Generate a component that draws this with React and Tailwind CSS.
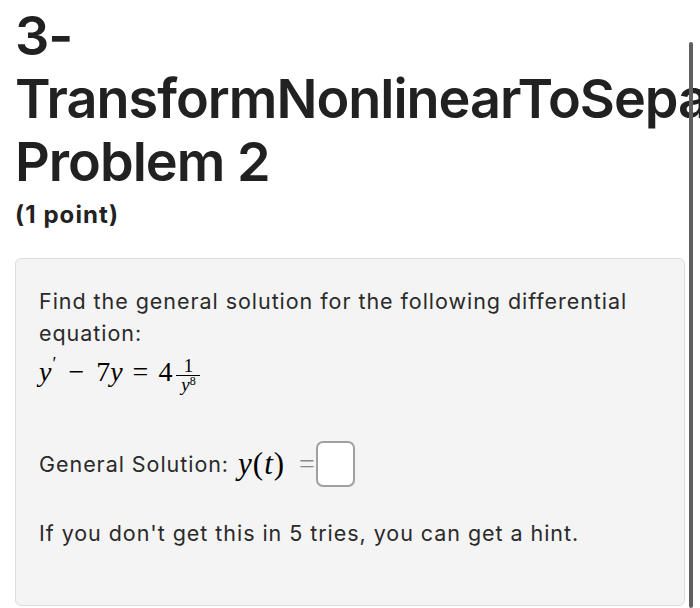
import React from "react";

const sans = { fontFamily: 'Inter, "Liberation Sans", Arial, sans-serif' };
const serif = { fontFamily: '"Liberation Serif", "Times New Roman", serif' };

export default function App() {
  return (
    <div className="relative w-[700px] h-[608px] overflow-hidden bg-white text-[#212529]" style={sans}>
      <div className="absolute left-[689px] top-[42px] w-[4px] h-[566px] bg-[#5f5f5f] rounded-full z-10" />
      <div className="pl-[15px] pt-[4px]">
        <h1 className="text-[54px] leading-[63px] font-semibold tracking-[-1px] whitespace-nowrap text-[#212121]">
          <div>3-</div>
          <div>TransformNonlinearToSeparable</div>
          <div>Problem 2</div>
        </h1>
        <div className="mt-[8px] text-[24px] font-bold leading-[28px] tracking-[1.1px] text-[#222]">(1 point)</div>
      </div>
      <div className="ml-[15px] mt-[29px] w-[670px] h-[348px] rounded-[6px] border border-[#dcdcdc] bg-[#f4f4f4] px-[23px] pt-[26px] text-[21.5px] tracking-[0.95px] text-[#2a2a2a]">
        <p className="leading-[32px]">Find the general solution for the following differential equation:</p>
        <div className="flex items-center h-[46px] text-[28px] tracking-normal text-black" style={serif}>
          <i className="pr-[1px]">y</i><span className="text-[18px] relative -top-[8px]">′</span>
          <span className="mx-[12px]">−</span>
          <span>7</span><i>y</i>
          <span className="mx-[10px]">=</span>
          <span>4</span>
          <span className="inline-flex flex-col items-center ml-[4px] relative top-[3px]">
            <span className="text-[19px] leading-[18px]">1</span>
            <span className="w-[24px] h-[1px] bg-black" />
            <span className="text-[19px] leading-[18px]"><i>y</i><sup className="text-[12px]">8</sup></span>
          </span>
        </div>
        <div className="mt-[46px] flex items-center h-[46px]">
          <span>General Solution:</span>
          <span className="ml-[9px] text-[31px] tracking-[1px] text-black" style={serif}>
            <i>y</i>(<i>t</i>)
          </span>
          <span className="ml-[14px] text-[28px] tracking-normal text-[#888]" style={serif}>=</span>
          <span className="ml-[1px] inline-block w-[39px] h-[46px] rounded-[7px] border-2 border-[#a0a0a0] bg-white" />
        </div>
        <p className="mt-[30px] leading-[32px]">If you don't get this in 5 tries, you can get a hint.</p>
      </div>
    </div>
  );
}
